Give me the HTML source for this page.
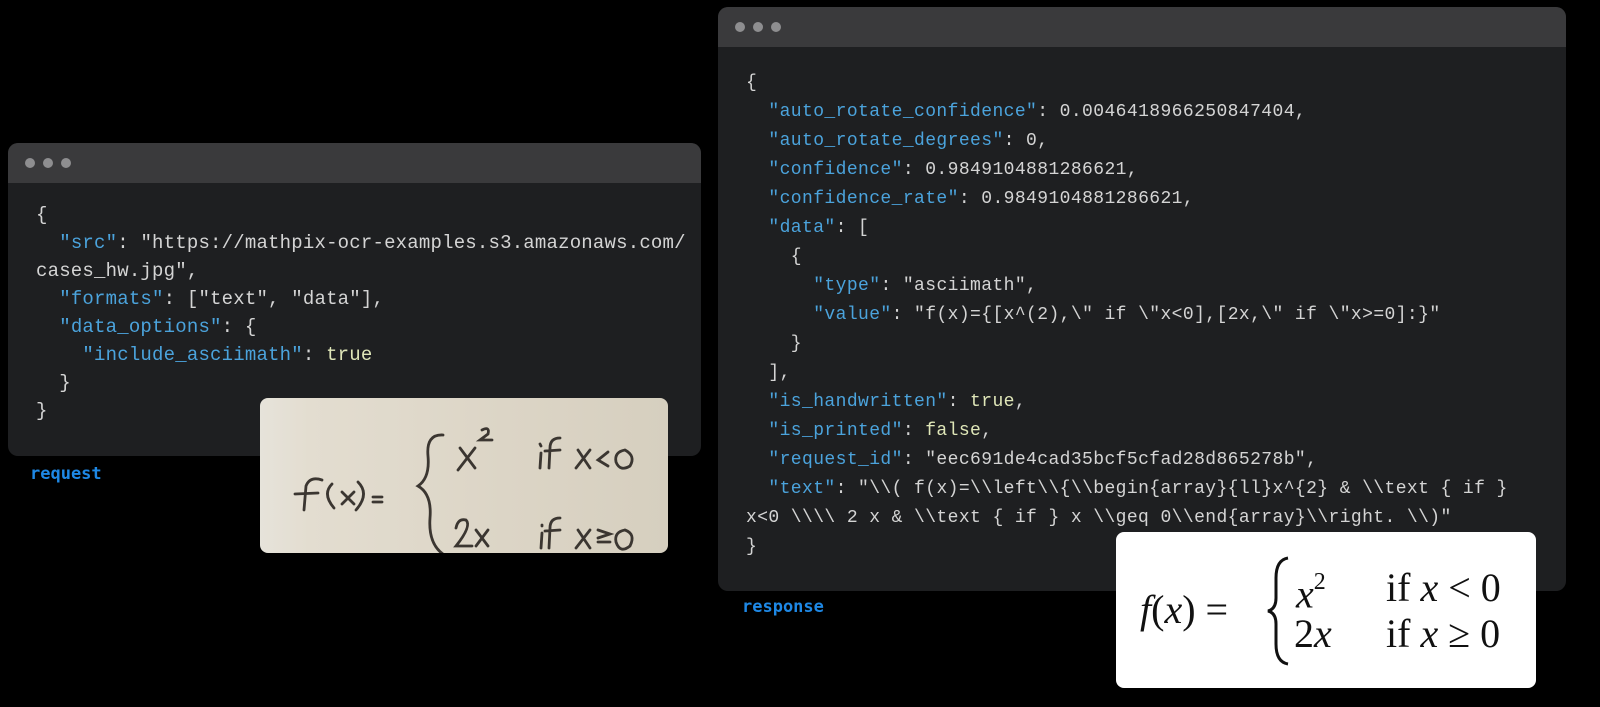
<!DOCTYPE html>
<html><head><meta charset="utf-8">
<style>
html,body{margin:0;padding:0;background:#000;width:1600px;height:707px;overflow:hidden;position:relative;font-family:"Liberation Mono",monospace}
.win{position:absolute;background:#1e1f21;border-radius:10px;overflow:hidden}
.bar{height:40px;background:#3a3a3c;position:relative}
.dot{position:absolute;top:15px;width:10px;height:10px;border-radius:50%;background:#8e8e90}
pre{margin:0;position:absolute;color:#d4d4d4;font-family:"Liberation Mono",monospace;white-space:pre}
.k{color:#4ba3dc}.b{color:#dfe6b8}
.lbl{position:absolute;color:#1e88e5;font-weight:bold;font-family:"DejaVu Sans Mono","Liberation Mono",monospace;font-size:17px}
.m{position:absolute;font-size:40px;line-height:44px;white-space:nowrap}
</style></head><body>
<div class="win" style="left:8px;top:143px;width:693px;height:313px">
<div class="bar"><div class="dot" style="left:17px"></div><div class="dot" style="left:35px"></div><div class="dot" style="left:53px"></div></div>
<pre style="left:28px;top:58px;font-size:19px;line-height:28px;letter-spacing:0.2px">{
  <span class="k">"src"</span>: "https://mathpix-ocr-examples.s3.amazonaws.com/
cases_hw.jpg",
  <span class="k">"formats"</span>: ["text", "data"],
  <span class="k">"data_options"</span>: {
    <span class="k">"include_asciimath"</span>: <span class="b">true</span>
  }
}</pre>
</div>
<div class="lbl" style="left:30px;top:464px">request</div>
<div style="position:absolute;left:260px;top:398px;width:408px;height:155px;border-radius:8px;background:linear-gradient(90deg,#e6e3da 0,#e3ddd0 12%,#dcd5c6 60%,#d6cfbf 100%)">
<svg width="408" height="155" style="position:absolute;left:0;top:0">
<g fill="none" stroke="#3b3631" stroke-width="2.8" stroke-linecap="round">
<path d="M62 82 Q50 78 46 88 L44 112 M35 96 L58 95"/>
<path d="M72 86 Q62 96 74 110"/>
<path d="M82 94 L94 106 M94 94 L82 106"/>
<path d="M98 84 Q110 96 96 112"/>
<path d="M113 99 L122 99 M113 104 L122 104"/>
<path d="M183 37 Q166 36 168 58 Q170 80 158 88 Q172 96 170 120 Q168 148 186 158"/>
<path d="M200 50 L215 70 M215 50 L198 72"/>
<path d="M222 32 Q230 28 228 36 L220 42 L232 42"/>
<path d="M280 46 L281 48 M281 55 L280 70 M300 40 Q290 40 290 50 L289 70 M285 53 L300 52"/>
<path d="M318 52 L330 70 M330 52 L316 70"/>
<path d="M348 54 L338 62 L348 68"/>
<path d="M365 52 Q354 54 356 64 Q360 74 370 68 Q376 58 365 52"/>
<path d="M196 130 Q198 120 206 122 Q212 128 196 148 L212 148"/>
<path d="M216 132 L228 148 M228 132 L216 148"/>
<path d="M282 127 L282 128 M282 135 L281 150 M300 120 Q290 120 290 130 L289 150 M285 133 L300 132"/>
<path d="M318 132 L330 150 M330 132 L316 150"/>
<path d="M338 132 L350 136 L338 140 M338 144 L350 144"/>
<path d="M365 132 Q354 134 356 144 Q360 156 370 148 Q376 136 365 132"/>
</g></svg></div>

<div class="win" style="left:718px;top:7px;width:848px;height:584px">
<div class="bar"><div class="dot" style="left:17px"></div><div class="dot" style="left:35px"></div><div class="dot" style="left:53px"></div></div>
<pre style="left:28px;top:62px;font-size:18px;line-height:29px;letter-spacing:0.4px">{
  <span class="k">"auto_rotate_confidence"</span>: 0.0046418966250847404,
  <span class="k">"auto_rotate_degrees"</span>: 0,
  <span class="k">"confidence"</span>: 0.9849104881286621,
  <span class="k">"confidence_rate"</span>: 0.9849104881286621,
  <span class="k">"data"</span>: [
    {
      <span class="k">"type"</span>: "asciimath",
      <span class="k">"value"</span>: "f(x)={[x^(2),\" if \"x&lt;0],[2x,\" if \"x&gt;=0]:}"
    }
  ],
  <span class="k">"is_handwritten"</span>: <span class="b">true</span>,
  <span class="k">"is_printed"</span>: <span class="b">false</span>,
  <span class="k">"request_id"</span>: "eec691de4cad35bcf5cfad28d865278b",
  <span class="k">"text"</span>: "\\( f(x)=\\left\\{\\begin{array}{ll}x^{2} &amp; \\text { if }
x&lt;0 \\\\ 2 x &amp; \\text { if } x \\geq 0\\end{array}\\right. \\)"
}</pre>
</div>
<div class="lbl" style="left:742px;top:597px">response</div>
<div style="position:absolute;left:1116px;top:532px;width:420px;height:156px;background:#fff;border-radius:8px;font-family:'Liberation Serif',serif;color:#111">
<div class="m" style="left:24px;top:56px"><i>f</i>(<i>x</i>) =</div>
<svg width="30" height="110" style="position:absolute;left:150px;top:24px"><path d="M22 2 Q10 4 10 22 L10 42 Q10 53 2 55 Q10 57 10 68 L10 88 Q10 106 22 108" fill="none" stroke="#111" stroke-width="3"/></svg>
<div class="m" style="left:180px;top:32px"><i>x</i><sup style="font-size:24px;position:relative;top:-4px">2</sup></div>
<div class="m" style="left:178px;top:80px">2<i>x</i></div>
<div class="m" style="left:270px;top:34px">if <i>x</i> &lt; 0</div>
<div class="m" style="left:270px;top:80px">if <i>x</i> ≥ 0</div>
</div>
</body></html>
